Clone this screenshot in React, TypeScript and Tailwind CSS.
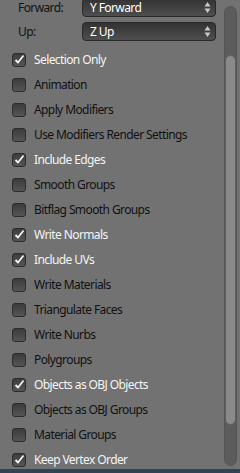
const options: { label: string; checked: boolean }[] = [
  { label: "Selection Only", checked: true },
  { label: "Animation", checked: false },
  { label: "Apply Modifiers", checked: false },
  { label: "Use Modifiers Render Settings", checked: false },
  { label: "Include Edges", checked: true },
  { label: "Smooth Groups", checked: false },
  { label: "Bitflag Smooth Groups", checked: false },
  { label: "Write Normals", checked: true },
  { label: "Include UVs", checked: true },
  { label: "Write Materials", checked: false },
  { label: "Triangulate Faces", checked: false },
  { label: "Write Nurbs", checked: false },
  { label: "Polygroups", checked: false },
  { label: "Objects as OBJ Objects", checked: true },
  { label: "Objects as OBJ Groups", checked: false },
  { label: "Material Groups", checked: false },
  { label: "Keep Vertex Order", checked: true },
];

function Dropdown({ label, value }: { label: string; value: string }) {
  return (
    <div className="flex items-center h-[19px]">
      <span className="w-[82px] pl-[18px] text-[12px] tracking-[-0.6px] text-[#111]">{label}</span>
      <div className="flex items-center justify-between w-[134px] h-[19px] rounded-[4px] border border-[#282828] bg-gradient-to-b from-[#333] to-[#4e4e4e] pl-[7px] pr-[4px]">
        <span className="text-[12px] tracking-[-0.6px] text-white">{value}</span>
        <svg width="7" height="13" viewBox="0 0 7 13">
          <polygon points="3.5,1 6.5,5.5 0.5,5.5" fill="#c8c8c8" />
          <polygon points="0.5,7.5 6.5,7.5 3.5,12" fill="#c8c8c8" />
        </svg>
      </div>
    </div>
  );
}

function Checkbox({ checked }: { checked: boolean }) {
  return (
    <div className="w-[14px] h-[14px] rounded-[3px] border border-[#2c2c2c] bg-gradient-to-b from-[#3c3c3c] to-[#555] flex items-center justify-center shrink-0">
      {checked && (
        <svg width="12" height="12" viewBox="0 0 12 12">
          <polyline points="2.5,6 5,8.5 10.5,1.5" fill="none" stroke="#f2f2f2" strokeWidth="1.8" strokeLinejoin="round" />
        </svg>
      )}
    </div>
  );
}

export default function App() {
  return (
    <div
      className="w-[240px] h-[473px] overflow-hidden bg-[#727272] flex flex-col"
      style={{ fontFamily: '"Noto Sans", sans-serif' }}
    >
      <div className="flex flex-1 min-h-0">
        <div className="w-[222px] flex flex-col">
          <div className="flex flex-col gap-[5px] -mt-[2px]">
            <Dropdown label="Forward:" value="Y Forward" />
            <Dropdown label="Up:" value="Z Up" />
          </div>
          <div className="flex flex-col mt-[6px]">
            {options.map((o) => (
              <div key={o.label} className="flex items-center h-[25px] pl-[12px] gap-[8px]">
                <Checkbox checked={o.checked} />
                <span className={`text-[12px] tracking-[-0.6px] whitespace-nowrap ${o.checked ? "text-[#f4f4f4]" : "text-[#111]"}`}>
                  {o.label}
                </span>
              </div>
            ))}
          </div>
        </div>
        <div className="w-[18px] pt-[6px] pb-[3px] pl-[2px] pr-[3px] flex">
          <div className="flex-1 rounded-full bg-[#5c5c5c] border border-[#555] flex flex-col pt-[48px] pb-[40px]">
            <div className="flex-1 rounded-full bg-[#8a8a8a] border border-[#606060]" />
          </div>
        </div>
      </div>
      <div className="h-[4px] bg-[#2e4558] shrink-0" />
    </div>
  );
}
